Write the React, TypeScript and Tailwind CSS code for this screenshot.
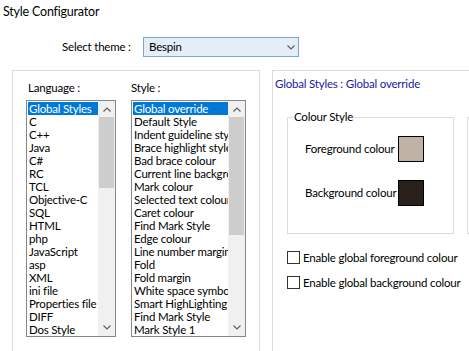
import React from "react";

const languages = [
  "Global Styles", "C", "C++", "Java", "C#", "RC", "TCL", "Objective-C", "SQL", "HTML",
  "php", "JavaScript", "asp", "XML", "ini file", "Properties file", "DIFF", "Dos Style",
];

const styles = [
  "Global override", "Default Style", "Indent guideline style", "Brace highlight style",
  "Bad brace colour", "Current line background colour", "Mark colour", "Selected text colour",
  "Caret colour", "Find Mark Style", "Edge colour", "Line number margin", "Fold", "Fold margin",
  "White space symbol", "Smart HighLighting", "Find Mark Style", "Mark Style 1",
];

function Chevron({ up }: { up?: boolean }) {
  return (
    <svg width="8" height="5" viewBox="0 0 8 5" className="block">
      <path
        d={up ? "M0.5 4.5 L4 1 L7.5 4.5" : "M0.5 0.5 L4 4 L7.5 0.5"}
        fill="none"
        stroke="#606060"
        strokeWidth="1.2"
      />
    </svg>
  );
}

function ScrollBar({ thumb }: { thumb: number }) {
  return (
    <div className="flex w-[17px] shrink-0 flex-col bg-[#f0f0f0]">
      <div className="flex h-[16px] items-center justify-center">
        <Chevron up />
      </div>
      <div className="mx-[1px] bg-[#cdcdcd]" style={{ height: thumb }} />
      <div className="flex-1" />
      <div className="flex h-[17px] items-center justify-center">
        <Chevron />
      </div>
    </div>
  );
}

function ListBox({ items, width, thumb }: { items: string[]; width: number; thumb: number }) {
  return (
    <div className="flex h-[237px] border border-[#828790] bg-white" style={{ width }}>
      <div className="min-w-0 flex-1 overflow-hidden py-[1px] pl-[1px]">
        {items.map((it, i) => (
          <div
            key={i}
            className={
              "h-[13px] overflow-hidden whitespace-nowrap pl-[1px] leading-[13px] " +
              (i === 0 ? "bg-[#0078d7] text-white" : "text-black")
            }
          >
            {it}
          </div>
        ))}
      </div>
      <ScrollBar thumb={thumb} />
    </div>
  );
}

export default function App() {
  return (
    <div
      className="h-[351px] w-[469px] overflow-hidden bg-white text-[11.5px] tracking-[-0.2px] text-black"
      style={{ fontFamily: 'Lato, "Noto Sans", sans-serif' }}
    >
      <div className="h-[24px] pl-[3px] text-[12.5px] leading-[24px]">Style Configurator</div>

      <div className="mt-[13px] flex h-[20px] items-center pl-[62px]">
        <span className="w-[81px] whitespace-nowrap">Select theme :</span>
        <div className="flex h-[20px] w-[156px] items-center justify-between border border-[#7ea6cf] bg-[#e5eef8] pl-[5px] pr-[3px]">
          <span>Bespin</span>
          <Chevron />
        </div>
      </div>

      <div className="mt-[13px] flex pl-[12px]">
        <div className="h-[300px] w-[248px] shrink-0 border border-[#dcdcdc] pl-[13px] pt-[10px]">
          <div className="flex gap-[15px]">
            <div className="flex flex-col">
              <div className="mb-[6px] h-[13px] pl-[2px] leading-[13px]">Language :</div>
              <ListBox items={languages} width={90} thumb={71} />
            </div>
            <div className="flex flex-col">
              <div className="mb-[6px] h-[13px] leading-[13px]">Style :</div>
              <ListBox items={styles} width={115} thumb={118} />
            </div>
          </div>
        </div>

        <div className="ml-[12px] h-[300px] w-[230px] shrink-0 border border-[#dcdcdc] pl-[2px] pt-[6px]">
          <div className="h-[13px] whitespace-nowrap leading-[13px] text-[#1a1aa8]">Global Styles : Global override</div>

          <div className="mt-[20px] flex gap-[13px] pl-[12px]">
            <fieldset className="h-[124px] w-[167px] shrink-0 border border-[#dcdcdc]">
              <legend className="ml-[5px] px-[1px] leading-[14px]">Colour Style</legend>
              <div className="mt-[12px] flex h-[26px] items-center pl-[17px]">
                <span className="w-[93px] whitespace-nowrap">Foreground colour</span>
                <div className="h-[26px] w-[26px] shrink-0 border border-black bg-[#bfb1a3]" />
              </div>
              <div className="mt-[18px] flex h-[26px] items-center pl-[17px]">
                <span className="w-[93px] whitespace-nowrap">Background colour</span>
                <div className="h-[26px] w-[26px] shrink-0 border border-black bg-[#2a211d]" />
              </div>
            </fieldset>
            <fieldset className="h-[124px] w-[100px] shrink-0 border border-[#dcdcdc]">
              <legend className="ml-[5px] leading-[14px]">&nbsp;</legend>
            </fieldset>
          </div>

          <div className="mt-[17px] flex h-[13px] items-center pl-[12px]">
            <div className="h-[13px] w-[13px] shrink-0 border border-[#333333] bg-white" />
            <span className="ml-[3px] whitespace-nowrap leading-[13px]">Enable global foreground colour</span>
          </div>
          <div className="mt-[12px] flex h-[13px] items-center pl-[12px]">
            <div className="h-[13px] w-[13px] shrink-0 border border-[#333333] bg-white" />
            <span className="ml-[3px] whitespace-nowrap leading-[13px]">Enable global background colour</span>
          </div>
        </div>
      </div>
    </div>
  );
}
